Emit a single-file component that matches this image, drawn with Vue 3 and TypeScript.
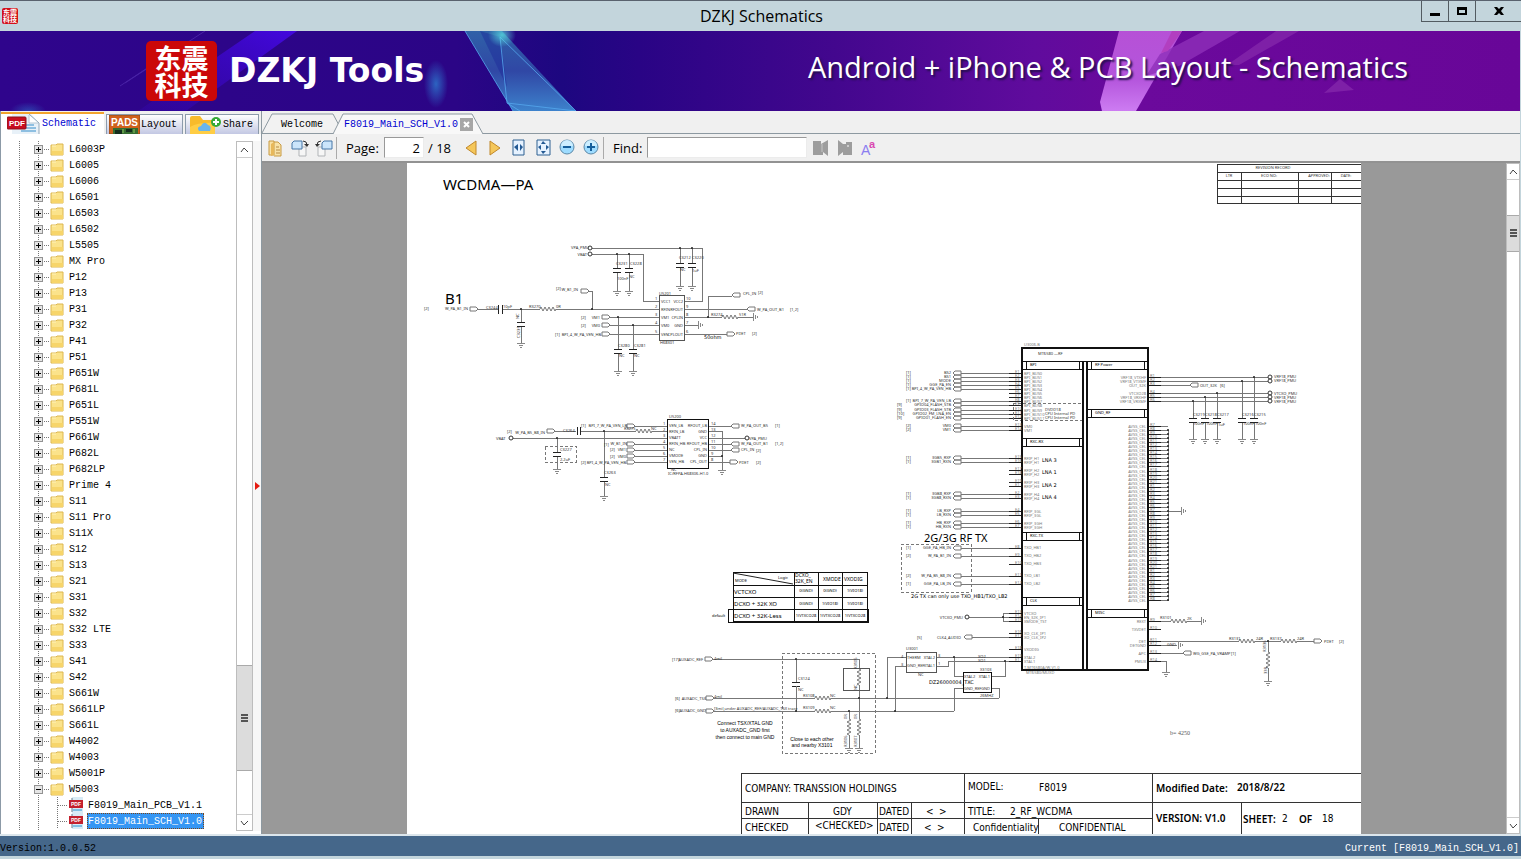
<script setup lang="ts">
import { ref } from 'vue'

type Label = [x: number, y: number, size: number, text: string, anchor?: 'start' | 'middle' | 'end']
type Point = [x: number, y: number]

const folders = [
  'L6003P', 'L6005', 'L6006', 'L6501', 'L6503', 'L6502', 'L5505', 'MX Pro', 'P12', 'P13', 'P31', 'P32',
  'P41', 'P51', 'P651W', 'P681L', 'P651L', 'P551W', 'P661W', 'P682L', 'P682LP', 'Prime 4', 'S11', 'S11 Pro',
  'S11X', 'S12', 'S13', 'S21', 'S31', 'S32', 'S32 LTE', 'S33', 'S41', 'S42', 'S661W', 'S661LP', 'S661L',
  'W4002', 'W4003', 'W5001P', 'W5003',
]
const openFolder = ref('W5003')
const files = ['F8019_Main_PCB_V1.1', 'F8019_Main_SCH_V1.0']
const selected = ref('F8019_Main_SCH_V1.0')
const page = ref('2')
const query = ref('')

function toggle(name: string) {
  openFolder.value = openFolder.value === name ? '' : name
}

const leftStubs = [
  373, 377, 381, 385, 389, 393, 397, 401, 405, 410, 414, 418, 426, 430, 458, 462, 470, 474, 482, 486, 494, 498,
  511, 515, 523, 527, 548, 556, 564, 576, 584, 613, 617, 621, 633, 637, 649, 657, 661,
]
const groundPins = Array.from({ length: 44 }, (_, i) => 426 + Math.round((i * 174) / 43))
const rightStubs = [377, 381, 385, 393, 397, 401, ...groundPins, 621, 629, 641, 645, 653, 661]
const stubs = leftStubs.map(y => `M1009 ${y}H1022`).join('') + rightStubs.map(y => `M1148 ${y}H1161`).join('')

const wires = [
  // band 1 amplifier
  'M592 248H702V301H684', 'M592 254H643V301H659', 'M589 291H592V309', 'M478 309H498M503 309H540M556 309H659',
  'M610 317H659M610 325H659M610 334H659', 'M684 309H747', 'M684 317H722M738 317H753M708 317V296H732',
  'M684 325H698', 'M684 334H727', 'M521 309V322M521 326V343',
  // band 5 / 8 amplifier
  'M555 431H576M580 431H636M652 431H667', 'M635 426H667M513 438H667M635 444H667M635 450H667M635 456H667M635 462H667',
  'M604 431V477', 'M708 426H731M708 431H722V470M708 438H745M708 444H731M708 450H731M708 456H722M708 462H730',
  // transceiver inputs
  ...[373, 377, 381, 385, 389, 401, 405, 410, 414, 418, 426, 430, 458, 462, 494, 498, 511, 515, 523, 527, 548, 556, 576, 584].map(y => `M961 ${y}H1010`),
  'M969 617H1003M1010 613H1003V621H1010M1003 617H1010', 'M972 637H1010',
  'M936 657H1010M936 666H948V661H1010', 'M906 657H887V698M906 666H895V711', 'M954 657V676H963M991 676H1005V661',
  'M963 688H954V711M991 688H999V698',
  // transceiver outputs
  ...groundPins.map(y => `M1161 ${y}H1168`),
  'M1161 377H1268M1161 381H1268M1161 385H1190M1161 393H1268M1161 397H1268M1161 401H1268',
  'M1168 430V601M1168 511H1181', 'M1161 621H1171M1187 621H1201', 'M1161 641H1239M1255 641H1281M1297 641H1314',
  'M1161 645H1177', 'M1161 653H1183', 'M1161 661H1166V672', 'M1268 641V652M1268 668V681',
  // auxiliary ADC
  'M713 659H859V669M859 685V719M859 735V748', 'M714 698H815M831 698H999', 'M714 711H815M831 711H954', 'M849 711V719M849 735V748',
].join('')

// x, start of the lead, plates, ground
const capacitors: [number, number, number, number][] = [
  [617, 254, 270, 291], [629, 254, 270, 291], [680, 248, 265, 286], [692, 248, 265, 286], [618, 317, 351, 371],
  [633, 325, 351, 371], [557, 438, 454, 469], [604, 470, 479, 496], [1193, 401, 420, 439], [1205, 397, 420, 439],
  [1217, 393, 420, 439], [1242, 381, 420, 439], [1254, 377, 420, 439], [521, 309, 324, 343],
]
const grounds: Point[] = [[722, 470], [1166, 672], [1268, 681], [849, 748], [859, 748]]
const sideGrounds: Point[] = [[753, 317], [698, 325], [1181, 511], [1201, 621], [1178, 645]]
const resistors: Point[] = [[540, 309], [722, 317], [636, 431], [1171, 621], [1239, 641], [1281, 641], [815, 698], [815, 711]]
const uprightResistors: Point[] = [[859, 669], [859, 719], [849, 719], [1268, 652]]
const outPorts: Point[] = [
  [581, 291], [470, 309], [602, 317], [602, 325], [602, 334], [727, 334], [547, 431], [627, 426], [627, 444],
  [627, 450], [627, 456], [627, 462], [730, 462], [705, 659], [706, 698], [706, 711], [1314, 641],
]
const inPorts: Point[] = [
  [732, 295], [747, 309], [731, 426], [731, 444], [731, 450], [1190, 385], [1183, 653], [964, 637],
  ...[373, 377, 381, 385, 389, 401, 405, 410, 414, 418, 426, 430, 458, 462, 494, 498, 511, 515, 523, 527, 548, 556, 576, 584].map(y => [953, y] as Point),
]
const terminals: Point[] = [
  [590, 248], [590, 254], [511, 438], [747, 438], [967, 617], [1270, 377], [1270, 381], [1270, 393], [1270, 397], [1270, 401],
]
const dots: Point[] = [
  [617, 254], [629, 254], [680, 248], [692, 248], [592, 309], [521, 309], [618, 317], [633, 325], [708, 317], [604, 431],
  [557, 438], [722, 456], [1003, 617], [954, 657], [1005, 661], [887, 698], [895, 711], [1254, 377], [1242, 381],
  [1217, 393], [1205, 397], [1193, 401], [1268, 641], [796, 659], [796, 711], [859, 698], [849, 711],
  ...groundPins.slice(1).map(y => [1168, y] as Point),
]
const sections: [number, number, string][] = [
  [1022, 361, 'BPI'], [1022, 438, 'RXC-RX'], [1022, 532, 'RXC-TX'], [1022, 597, 'CLK'],
  [1087, 361, 'RF Power'], [1087, 409, 'GND_RF'], [1087, 609, 'MISC'],
]

const nets: [number, string, string][] = [
  [373, 'BS2', '[1]'], [377, 'BS1', '[1]'], [381, 'MODE', '[1]'], [385, 'GGE_PA_EN', '[1]'], [389, 'BPI_4_W_PA_VEN_HB', '[1]'],
  [401, 'BPI_7_W_PA_VEN_LB', '[1]'], [405, 'GPIO04_FLASH_STB', '[9]'], [410, 'GPIO03_FLASH_STB', '[9]'],
  [414, 'GPIO02_FM_LNA_EN', '[10]'], [418, 'GPIO01_FLASH_EN', '[9]'], [426, 'VM0', '[2]'], [430, 'VM1', '[2]'],
  [458, '3GB5_RXP', '[1]'], [462, '3GB1_RXN', '[1]'], [494, '3GB8_RXP', '[1]'], [498, '3GB8_RXN', '[1]'],
  [511, 'LB_RXP', '[1]'], [515, 'LB_RXN', '[1]'], [523, 'HB_RXP', '[1]'], [527, 'HB_RXN', '[1]'],
  [548, 'GGE_PA_HB_IN', '[1]'], [556, 'W_PA_B1_IN', '[2]'], [576, 'W_PA_B5_B8_IN', '[2]'], [584, 'GGE_PA_LB_IN', '[1]'],
]
const netLabels: Label[] = nets.flatMap(([y, name, sheet]): Label[] => [
  [951, y + 1, 4, name, 'end'],
  [y > 402 && y < 420 ? 897 : 906, y + 1, 4, sheet],
])

const pinNames: Label[] = [
  ...[373, 377, 381, 385, 389, 393, 397, 401, 405, 410, 414, 418].map((y, i): Label => [1024, y + 2, 4, `BPI_BUS${i}`]),
  [1024, 428, 4, 'VM0'], [1024, 432, 4, 'VM1'],
  ...[458, 462, 470, 474, 482, 486, 494, 498].map((y, i): Label => [1024, y + 2, 4, `RFIP_H${(i >> 1) + 1}`]),
  ...[511, 515, 523, 527].map((y, i): Label => [1024, y + 2, 4, `RFIP_3G${i < 2 ? 'L' : 'H'}`]),
  [1024, 549, 4, 'TXO_HB1'], [1024, 557, 4, 'TXO_HB2'], [1024, 565, 4, 'TXO_HB3'], [1024, 577, 4, 'TXO_LB1'], [1024, 585, 4, 'TXO_LB2'],
  [1024, 615, 4, 'VTCXO'], [1024, 619, 4, 'EN_32K_IP1'], [1024, 623, 4, 'XMODE_TST'], [1024, 635, 4, 'XO_CLK_IP1'],
  [1024, 639, 4, 'XO_CLK_IP2'], [1024, 651, 4, 'VXODIG'], [1024, 659, 4, 'XTAL2'], [1024, 663, 4, 'XTAL1'],
  [1146, 379, 4, 'VRF18_VTXHF', 'end'], [1146, 383, 4, 'VRF18_VTXMF', 'end'], [1146, 387, 4, 'OUT_32K', 'end'],
  [1146, 395, 4, 'VTCXO28', 'end'], [1146, 399, 4, 'VRF18_VRXHF', 'end'], [1146, 403, 4, 'VRF18_VRXMF', 'end'],
  ...groundPins.map((y): Label => [1146, y + 2, 4, 'AVSS_CEL', 'end']),
  [1146, 623, 4, 'REXT', 'end'], [1146, 631, 4, 'TXVDET', 'end'], [1146, 643, 4, 'DET', 'end'], [1146, 647, 4, 'DETGND', 'end'],
  [1146, 655, 4, 'APC', 'end'], [1146, 663, 4, 'PMUX', 'end'],
  ...rightStubs.map((y, i): Label => [1150, y, 4, 'R' + (i % 21 + 1)]),
  ...leftStubs.map((y, i): Label => [1015, y, 4, 'E' + (i % 19 + 1)]),
  [1024, 346, 4, 'U3006-B'], [1024, 669, 4, 'T-MT6580A/W-V1.0'], [1026, 674, 4, 'MT6580/MUXD'],
]

const smallLabels: Label[] = [
  [589, 249, 4, 'VPA_PMU', 'end'], [587, 256, 4, 'VBAT', 'end'], [616, 265, 4, 'C3231'], [630, 265, 4, 'C3228'],
  [617, 280, 4, '100nF'], [629, 278, 4, 'NC'], [679, 259, 4, 'C3212'], [692, 259, 4, 'C3220'], [680, 271, 4, 'NC'], [692, 272, 4, '1uF'],
  [556, 290, 4, '[2]'], [578, 291, 4, 'W_B1_IN', 'end'], [424, 310, 4, '[2]'], [468, 310, 4, 'W_PA_B1_IN', 'end'],
  [486, 309, 4, 'C3244'], [503, 308, 4, '10pF'], [529, 308, 4, 'R3270'], [556, 308, 4, '0R'], [659, 295, 4, 'U5201'], [660, 344, 4, 'H68301'],
  [661, 303, 4, 'VCC1'], [661, 311, 4, 'RFIN'], [661, 319, 4, 'VM1'], [661, 327, 4, 'VM0'], [661, 336, 4, 'VEN'],
  [683, 303, 4, 'VCC2', 'end'], [683, 311, 4, 'RFOUT', 'end'], [683, 319, 4, 'CPLIN', 'end'], [683, 327, 4, 'GND', 'end'], [683, 336, 4, 'CPLOUT', 'end'],
  ...[300, 308, 316, 324, 333].flatMap((y, i): Label[] => [[655, y, 4, String(i + 1)], [686, y, 4, String(10 - i)]]),
  [581, 319, 4, '[2]'], [600, 319, 4, 'VM1', 'end'], [581, 327, 4, '[2]'], [600, 327, 4, 'VM0', 'end'],
  [555, 336, 4, '[1]'], [601, 336, 4, 'BPI_4_W_PA_VEN_HB', 'end'], [618, 347, 4, 'C3280'], [634, 347, 4, 'C3281'], [619, 357, 4, 'NC'], [634, 357, 4, 'NC'],
  [743, 295, 4, 'CPL_IN'], [758, 294, 4, '[2]'], [757, 311, 4, 'W_PA_OUT_B1'], [790, 311, 4, '[1,2]'], [711, 316, 4, 'R3274'], [739, 316, 4, '51R'],
  [736, 335, 4, 'PDET'], [752, 335, 4, '[2]'],
  [507, 433, 4, '[2]'], [545, 434, 4, 'W_PA_B5_B8_IN', 'end'], [563, 432, 4, 'C3264'], [496, 440, 4, 'VBAT'], [581, 427, 4, '[1]'],
  [627, 427, 4, 'BPI_7_W_PA_VEN_LB', 'end'], [624, 430, 4, 'R3275'], [651, 430, 4, 'NC'], [560, 451, 4, 'C3227'], [560, 461, 4, '2.2uF'],
  [604, 446, 4, '[1]'], [627, 445, 4, 'W_B1_IN', 'end'], [610, 451, 4, '[2]'], [626, 451, 4, 'VM1', 'end'], [610, 458, 4, '[2]'], [626, 458, 4, 'VM0', 'end'],
  [581, 464, 4, '[2]'], [626, 464, 4, 'BPI_4_W_PA_VEN_HB', 'end'], [604, 474, 4, 'C3263'], [605, 486, 4, 'NC'], [669, 418, 4, 'U5200'],
  ...['VEN_LB', 'RFIN_LB', 'VBATT', 'RFIN_HB', 'NC', 'VMODE', 'VEN_HB'].map((t, i): Label => [669, 427 + i * 6, 4, t]),
  ...['RFOUT_LB', 'GND', 'VCC', 'RFOUT_HB', 'CPL_IN', 'GND', 'CPL_OUT'].map((t, i): Label => [707, 427 + i * 6, 4, t, 'end']),
  ...[0, 1, 2, 3, 4, 5, 6].flatMap((i): Label[] => [[663, 425 + i * 6, 4, String(i + 1)], [711, 425 + i * 6, 4, String(14 - i)]]),
  [671, 471, 4, 'NC'], [668, 475, 4, 'IC/RFPA-H68306-H1.0'], [741, 427, 4, 'W_PA_OUT_B5'], [775, 427, 4, '[1]'], [749, 440, 4, 'VPA_PMU'],
  [741, 445, 4, 'W_PA_OUT_B1'], [775, 445, 4, '[1,2]'], [741, 451, 4, 'CPL_IN'], [756, 452, 4, '[2]'], [739, 464, 4, 'PDET'], [756, 464, 4, '[2]'],
  [1038, 355, 4, 'MT6580 —RF'], [1045, 411, 4, 'DVDD18'], [1045, 415, 4, 'CPU Internal PD'], [1045, 419, 4, 'CPU Internal PD'],
  [963, 619, 4, 'VTCXO_PMU', 'end'], [917, 639, 4, '[5]'], [961, 639, 4, 'CLK4_AUDIO', 'end'],
  [906, 650, 4, 'U3001'], [907, 659, 4, 'THERM'], [935, 659, 4, 'XTAL2', 'end'], [907, 667, 4, 'GND_REF'], [935, 667, 4, 'XTAL1', 'end'], [918, 676, 4, 'NC'],
  [978, 658, 4, 'XO2'], [978, 662, 4, 'XO1'], [901, 658, 4, '4'], [901, 666, 4, '3'], [938, 657, 4, '3'], [938, 665, 4, '1'],
  [980, 671, 4, 'X3103'], [964, 678, 4, 'XTAL2'], [990, 678, 4, 'XTAL1', 'end'], [964, 690, 4, 'GND_REF'], [990, 690, 4, 'GND', 'end'], [980, 697, 4, '26MHZ'],
  [1274, 378, 4, 'VRF18_PMU'], [1274, 382, 4, 'VRF18_PMU'], [1200, 387, 4, 'OUT_32K'], [1220, 387, 4, '[6]'], [1274, 395, 4, 'VTCXO_PMU'],
  [1274, 399, 4, 'VRF18_PMU'], [1274, 403, 4, 'VRF18_PMU'], [1193, 416, 4, 'C3219'], [1205, 416, 4, 'C3218'], [1217, 416, 4, 'C3217'],
  [1242, 416, 4, 'C3216'], [1254, 416, 4, 'C3215'], [1193, 425, 4, '100nF'], [1206, 425, 4, '100nF'], [1218, 426, 4, '1uF'], [1243, 425, 4, '100nF'], [1255, 425, 4, '100nF'],
  [1160, 619, 4, 'R3101'], [1187, 620, 4, '2K'], [1167, 646, 4, 'GND'], [1193, 655, 4, 'WG_GSE_PA_VRAMP'], [1231, 655, 4, '[1]'],
  [1229, 640, 4, 'R3131'], [1256, 640, 4, '24R'], [1270, 640, 4, 'R3137'], [1297, 640, 4, '24R'], [1324, 643, 4, 'PDET'], [1339, 643, 4, '[2]'],
  [672, 661, 4, '[17]'], [703, 661, 4, 'AUXADC_REF', 'end'], [714, 660, 4, '4mil'], [675, 700, 4, '[6]'], [706, 700, 4, 'AUXADC_TSX', 'end'],
  [714, 698, 4, '4mil'], [675, 712, 4, '[6]'], [706, 712, 4, 'AUXADC_GND', 'end'], [714, 710, 4, '[3mil,under AUXADC_REF/AUXADC_TSX trace'],
  [798, 680, 4, 'C3124'], [798, 691, 4, 'NC'], [803, 697, 4, 'R3108'], [830, 697, 4, 'NC'], [803, 709, 4, 'R3109'], [830, 709, 4, 'NC'],
  [1273, 169, 4, 'REVISION RECORD', 'middle'], [1229, 177, 4, 'LTR', 'middle'],
  [1269, 177, 4, 'ECO NO:', 'middle'], [1319, 177, 4, 'APPROVED:', 'middle'], [1346, 177, 4, 'DATE:', 'middle'],
]

const uprightLabels: Label[] = [
  [519, 319, 4, 'NC'], [520, 338, 4, 'C3235'], [857, 669, 4, 'R3105'], [857, 690, 4, 'NC'], [847, 719, 4, '0R'], [857, 719, 4, '0R'],
  [847, 747, 4, 'R3106'], [857, 747, 4, 'R3107'], [1266, 652, 4, 'R3136'], [1267, 674, 4, '33R'],
]

const largeLabels: Label[] = [
  [443, 190, 15, 'WCDMA—PA'], [445, 304, 15, 'B1'], [924, 542, 11, '2G/3G RF TX'],
  [735, 582, 4, 'MODE'], [778, 579, 4, 'Logic'], [795, 577, 5, 'DCXO_'], [795, 583, 5, '32K_EN'], [823, 581, 5, 'XMODE'], [844, 581, 5, 'VXODIG'],
  [734, 594, 6, 'VCTCXO'], [734, 606, 6, 'DCXO + 32K XO'], [734, 618, 6, 'DCXO + 32K-Less'], [712, 617, 4, 'default'],
  [806, 592, 4, '0(GND)', 'middle'], [830, 592, 4, '0(GND)', 'middle'], [855, 592, 4, '1(VIO18)', 'middle'],
  [806, 605, 4, '0(GND)', 'middle'], [830, 605, 4, '1(VIO18)', 'middle'], [855, 605, 4, '1(VIO18)', 'middle'],
  [806, 617, 4, '1(VTXCO28', 'middle'], [830, 617, 4, '1(VTXCO28', 'middle'], [855, 617, 4, '1(VTXCO28', 'middle'],
]
const wideLabels: Label[] = [
  [911, 598, 5, '2G TX can only use TXO_HB1/TXO_LB2'], [929, 684, 5, 'DZ26000004_TXC'], [704, 339, 5, '50ohm'],
  [1042, 462, 5, 'LNA 3'], [1042, 474, 5, 'LNA 1'], [1042, 487, 5, 'LNA 2'], [1042, 499, 5, 'LNA 4'],
]
const notes: Label[] = [
  [745, 725, 5, 'Connect TSX/XTAL GND', 'middle'], [745, 732, 5, 'to AUXADC_GND first', 'middle'], [745, 739, 5, 'then connect to main GND', 'middle'],
  [812, 741, 5, 'Close to each other', 'middle'], [812, 747, 5, 'and nearby X3101', 'middle'],
]
const blockLabels: Label[] = [
  [745, 792, 10, 'COMPANY: TRANSSION HOLDINGS'], [968, 790, 10, 'MODEL:'], [1039, 791, 10, 'F8019'],
  [745, 815, 10, 'DRAWN'], [833, 815, 10, 'GDY'], [879, 815, 10, 'DATED'], [926, 815, 10, '<'], [939, 815, 10, '>'],
  [968, 815, 10, 'TITLE:'], [1010, 815, 10, '2_RF_WCDMA'], [745, 831, 10, 'CHECKED'], [815, 829, 10, '<CHECKED>'],
  [879, 831, 10, 'DATED'], [924, 831, 10, '<'], [937, 831, 10, '>'], [973, 831, 10, 'Confidentiality'], [1059, 831, 10, 'CONFIDENTIAL'],
  [1282, 822, 10, '2'], [1322, 822, 10, '18'],
]
const strongLabels: Label[] = [
  [1156, 792, 10, 'Modified Date:'], [1237, 791, 10, '2018/8/22'], [1156, 822, 10, 'VERSION:'], [1205, 822, 10, 'V1.0'],
  [1243, 823, 10, 'SHEET:'], [1299, 823, 10, 'OF'],
]
</script>

<template>
  <div class="window">
    <header class="titlebar">
      <span class="app-icon" aria-hidden="true"><span>东震</span><span>科技</span></span>
      <h1>DZKJ Schematics</h1>
      <div class="window-buttons">
        <button type="button" aria-label="Minimize"><svg width="12" height="12"><path d="M1 8h10v3H1z" /></svg></button>
        <button type="button" aria-label="Maximize"><svg width="12" height="12"><path d="M1 2h10v8H1zM3 5v3h6V5z" fill-rule="evenodd" /></svg></button>
        <button type="button" class="close" aria-label="Close"><svg width="12" height="12"><path d="M1 2h3l2 2 2-2h3L8 6l3 4H8L6 8l-2 2H1l3-4z" /></svg></button>
      </div>
    </header>

    <section class="banner">
      <svg class="banner-art" viewBox="0 0 1520 80" preserveAspectRatio="none" aria-hidden="true">
        <defs>
          <linearGradient id="sky">
            <stop offset="0" stop-color="#2f058c" /><stop offset=".3" stop-color="#2b0586" /><stop offset=".37" stop-color="#1d0780" />
            <stop offset=".42" stop-color="#290485" /><stop offset=".55" stop-color="#43078e" /><stop offset=".68" stop-color="#600b9d" />
            <stop offset=".75" stop-color="#6b099c" /><stop offset="1" stop-color="#680698" />
          </linearGradient>
          <linearGradient id="streak" x1="1" x2="0" y2="1"><stop offset="0" stop-color="#4308de" /><stop offset="1" stop-color="#3807c4" stop-opacity=".2" /></linearGradient>
          <linearGradient id="crystal" x2="0" y2="1"><stop offset="0" stop-color="#2f61a8" /><stop offset=".5" stop-color="#3047a5" /><stop offset="1" stop-color="#3d82cc" /></linearGradient>
          <linearGradient id="pink" x2="0" y2="1"><stop offset="0" stop-color="#b651d6" /><stop offset=".6" stop-color="#b455dc" /><stop offset="1" stop-color="#cd7cf2" /></linearGradient>
          <radialGradient id="glow"><stop offset="0" stop-color="#2d7bd0" stop-opacity=".8" /><stop offset="1" stop-color="#2d7bd0" stop-opacity="0" /></radialGradient>
          <radialGradient id="spark"><stop offset="0" stop-color="#58dce0" stop-opacity=".8" /><stop offset="1" stop-color="#58dce0" stop-opacity="0" /></radialGradient>
        </defs>
        <path fill="url(#sky)" d="M0 0h1520v80H0z" />
        <path fill="url(#streak)" d="M255 0h42L186 80h-48z" />
        <path d="M205 0L125 52M170 22L120 55" stroke="#5a35b8" opacity=".6" />
        <ellipse cx="28" cy="80" rx="18" ry="9" fill="url(#glow)" opacity=".6" />
        <ellipse cx="436" cy="53" rx="12" ry="24" fill="url(#glow)" />
        <path fill="url(#crystal)" d="M465 0h37l74 80h-63z" />
        <path fill="#1d2798" opacity=".45" d="M480 0l20 6 7 50z" />
        <path d="M465 0l48 80M500 6l76 74M500 6l7 66 13 8M507 72l69 8" fill="none" stroke="#55a7ed" opacity=".8" />
        <ellipse cx="502" cy="4" rx="14" ry="12" fill="url(#spark)" />
        <path fill="url(#pink)" d="M1119 0h63l-46 80h-34l-2-9z" />
        <path fill="#8f30b9" d="M1204 0h36l-61 35-33 10 14-22z" opacity=".8" />
        <path fill="#b23fc0" d="M1161 22l11-22h10l-14 20z" />
        <path fill="#8327aa" d="M1276 0h23l-60 34h-12zM1340 48l-16 14 30-3z" opacity=".8" />
      </svg>
      <div class="brand">
        <span class="brand-seal"><span>东震</span><span>科技</span></span>
        <strong>DZKJ Tools</strong>
      </div>
      <p>Android + iPhone &amp; PCB Layout - Schematics</p>
    </section>

    <main class="workspace">
      <aside class="sidebar">
        <nav class="side-tabs" aria-label="Libraries">
          <button type="button" class="side-tab active">
            <svg width="34" height="20" aria-hidden="true">
              <path d="M5 0h19l8 9v11H5z" fill="#e8f1f8" /><path d="M22 0l10 9v11" fill="none" stroke="#93a7b8" /><path d="M22 1v8h9" fill="#fff" stroke="#b6c8d4" />
              <path d="M14 14h15M14 17h15M16 11h11" stroke="#8ebfe1" stroke-width="2" />
              <rect y="3" width="19" height="12" rx="1" fill="#c80d20" stroke="#8b101c" /><text x="2" y="12" class="pdf-text">PDF</text>
            </svg>
            <span>Schematic</span>
          </button>
          <button type="button" class="side-tab">
            <svg width="31" height="19" aria-hidden="true">
              <rect width="31" height="19" fill="#d0601c" stroke="#8e4a1b" /><path d="M4 13h25v6H4z" fill="#356c30" /><path d="M6 15h7v4H6zM17 14h6v3h-6z" fill="#142d1d" /><path d="M14 14v4M25 14v4" stroke="#8fc561" />
              <text x="2" y="11" class="pads-text">PADS</text>
            </svg>
            <span>Layout</span>
          </button>
          <button type="button" class="side-tab">
            <svg width="32" height="19" aria-hidden="true">
              <path d="M0 3q0-2 2-2h8l3 4h12v14H2q-2 0-2-2z" fill="#f8bb2b" /><path d="M0 12q9-5 25-4v11H0z" fill="#ffcd44" />
              <path d="M9 16q-3-4 2-5 3-6 7-1 4 1 2 6z" fill="#69b5eb" /><circle cx="26" cy="7" r="5" fill="#36a936" /><path d="M26 4v6M23 7h6" stroke="#fff" stroke-width="2" />
            </svg>
            <span>Share</span>
          </button>
        </nav>
        <div class="tree-area">
          <ul class="tree">
            <li v-for="name in folders" :key="name">
              <div class="tree-row">
                <button type="button" class="expander" :aria-label="'Toggle ' + name" @click="toggle(name)">
                  <svg width="9" height="9"><path d="M2 4h5v1H2z" /><path v-if="openFolder !== name" d="M4 2h1v5H4z" /></svg>
                </button>
                <svg class="folder" width="14" height="13" aria-hidden="true"><path d="M1 2h5l1-1h6v11H1z" fill="#fbe38b" stroke="#dcb64e" /><path d="M2 8h11v4H2z" fill="#f7d56a" /><path d="M2 3h4" stroke="#fff4bd" /></svg>
                <span>{{ name }}</span>
              </div>
              <ul v-if="openFolder === name" class="files">
                <li v-for="file in files" :key="file">
                  <svg width="17" height="16" aria-hidden="true"><path d="M4 0h11v16H4z" fill="#d9ebf5" /><path d="M4 1v14" stroke="#65788a" /><path d="M5 13h9" stroke="#7fbfe2" stroke-width="2" /><path d="M1 3h14v8H1z" fill="#c3202d" /><text x="3" y="9" class="file-pdf">PDF</text></svg>
                  <button type="button" :class="{ selected: selected === file }" @click="selected = file">{{ file }}</button>
                </li>
              </ul>
            </li>
          </ul>
          <div class="scrollbar tree-scroll" aria-hidden="true">
            <span class="arrow"><svg width="9" height="6"><path d="M1 5l3-4 4 4" /></svg></span>
            <span class="track-before"></span><span class="thumb"><i></i><i></i><i></i></span><span class="track-after"></span>
            <span class="arrow"><svg width="9" height="6"><path d="M1 1l3 4 4-4" /></svg></span>
          </div>
          <div class="splitter" aria-hidden="true"><svg width="5" height="8"><path d="M0 0l5 4-5 4z" fill="#e51b12" /></svg></div>
        </div>
      </aside>

      <section class="document">
        <nav class="doc-tabs" aria-label="Open documents">
          <button type="button" class="doc-tab welcome">
            <svg width="80" height="23" aria-hidden="true"><path d="M0 22L10 3H71L79 18" fill="#f2f2f2" stroke="#8d99a1" /></svg><span>Welcome</span>
          </button>
          <div class="doc-tab current">
            <svg width="152" height="23" aria-hidden="true"><path d="M0 23L10 3H139L150 23" fill="#f8f8f8" stroke="#8d99a1" /></svg>
            <button type="button">F8019_Main_SCH_V1.0</button>
            <button type="button" class="tab-close" aria-label="Close tab"><svg width="13" height="13"><path d="M4 4l5 5M9 4l-5 5" stroke="#fff" stroke-width="2" /></svg></button>
          </div>
        </nav>

        <div class="toolbar">
          <button type="button" aria-label="Open"><svg width="18" height="18"><path d="M2 2h5v14H2zM7 3h4l3 3v11H7" fill="#f8e2a7" stroke="#c89a43" /><path d="M7 3L4 5v12l3-1z" fill="#e7b85b" /><path d="M9 8h3M9 11h4M9 14h4" stroke="#b68b45" /></svg></button>
          <button type="button" aria-label="Rotate clockwise"><svg width="18" height="18"><path d="M8 8h7v9H8z" fill="#f6f6f6" stroke="#b1b4b7" /><path d="M3 2h8v8H1V4z" fill="#cbe5fb" stroke="#4777a7" /><path d="M12 2q4 0 4 4" fill="none" stroke="#333" /><path d="M13 5h5l-2 3z" fill="#333" /></svg></button>
          <button type="button" aria-label="Rotate counterclockwise"><svg width="18" height="18"><path d="M3 8h7v9H3z" fill="#f6f6f6" stroke="#b1b4b7" /><path d="M9 2h8v8H7V4z" fill="#cbe5fb" stroke="#4777a7" /><path d="M6 2q-4 0-4 4" fill="none" stroke="#333" /><path d="M0 5h5L2 8z" fill="#333" /></svg></button>
          <span class="separator"></span>
          <label class="page-label" for="page">Page:</label><input id="page" v-model="page" class="page-input" type="text"><span class="page-total">/ 18</span>
          <button type="button" aria-label="Previous page"><svg width="12" height="16"><path d="M11 1v14L1 8z" fill="#f5c75a" stroke="#c1882b" /></svg></button>
          <button type="button" aria-label="Next page"><svg width="12" height="16"><path d="M1 1v14l10-7z" fill="#f5c75a" stroke="#c1882b" /></svg></button>
          <button type="button" aria-label="Fit width"><svg width="14" height="17"><path d="M1 1h11v15H1z" fill="#e6f2ff" stroke="#2f6091" /><path d="M6 5v7L2 8zM8 5l3 3-3 4z" fill="#245a94" /></svg></button>
          <button type="button" aria-label="Fit page"><svg width="15" height="17"><path d="M1 1h13v15H1z" fill="#e6f2ff" stroke="#2f6091" /><path d="M7 2l3 3H5zM7 15l3-3H5zM2 8l3-2v5zM13 8l-3-2v5z" fill="#245a94" /></svg></button>
          <button type="button" aria-label="Zoom out"><svg width="17" height="17"><circle cx="8" cy="8" r="7" fill="#9edcff" stroke="#5d88a6" /><path d="M2 7a6 6 0 0 1 12 0z" fill="#cceeff" /><path d="M4 8h8" stroke="#145e9b" stroke-width="2" /></svg></button>
          <button type="button" aria-label="Zoom in"><svg width="17" height="17"><circle cx="8" cy="8" r="7" fill="#9edcff" stroke="#5d88a6" /><path d="M2 7a6 6 0 0 1 12 0z" fill="#cceeff" /><path d="M4 8h8M8 4v8" stroke="#145e9b" stroke-width="2" /></svg></button>
          <span class="separator"></span>
          <label class="find-label" for="find">Find:</label><input id="find" v-model="query" class="find-input" type="text">
          <button type="button" aria-label="Find previous"><svg width="16" height="16"><path d="M0 1h8v3l7-4v16l-5-4v3H0z" fill="#9d9d9d" /><path d="M9 4v8" stroke="#c5c5c5" /></svg></button>
          <button type="button" aria-label="Find next"><svg width="16" height="16"><path d="M1 0l5 4h3V2h6v13H6v-3l-5 4z" fill="#9d9d9d" /><circle cx="11" cy="6" r="1" fill="#ddd" /></svg></button>
          <button type="button" aria-label="Match case"><svg width="18" height="22"><text x="1" y="18" class="case-big">A</text><text x="9" y="11" class="case-small">a</text></svg></button>
        </div>

        <div class="viewer">
          <div class="canvas">
            <svg class="sheet" viewBox="407 163 954 671" role="img" aria-label="WCDMA power amplifier schematic">
              <defs>
                <path id="out-port" d="M0-2H6L8 0L6 2H0Z" />
                <path id="in-port" d="M8-2H2L0 0L2 2H8Z" />
                <path id="ground" d="M-4 0H4M-2 2H2M-1 4H1" />
                <path id="side-ground" d="M0-4V4M2-2V2M4-1V1" />
                <path id="resistor" d="M0 0l1-2 2 4 2-4 2 4 2-4 2 4 2-4 2 4 1-2" />
              </defs>
              <path class="wire" :d="wires" />
              <path class="stub" :d="stubs" />
              <path class="stub" d="M498 305v9M502 305v9M577 427v8M580 427v8M792 682h8M792 686h8" />
              <path class="wire" d="M796 659V682M796 686V711" />
              <g class="part">
                <use v-for="(p, i) in outPorts" :key="'o' + i" href="#out-port" :x="p[0]" :y="p[1]" />
                <use v-for="(p, i) in inPorts" :key="'i' + i" href="#in-port" :x="p[0]" :y="p[1]" />
                <use v-for="(p, i) in resistors" :key="'r' + i" href="#resistor" :x="p[0]" :y="p[1]" />
                <use v-for="(p, i) in uprightResistors" :key="'u' + i" href="#resistor" :transform="`translate(${p[0]} ${p[1]}) rotate(90)`" />
                <use v-for="(p, i) in sideGrounds" :key="'s' + i" class="earth" href="#side-ground" :x="p[0]" :y="p[1]" />
                <use v-for="(p, i) in grounds" :key="'g' + i" class="earth" href="#ground" :x="p[0]" :y="p[1]" />
                <circle v-for="(p, i) in terminals" :key="'t' + i" :cx="p[0]" :cy="p[1]" r="2" />
              </g>
              <g v-for="(c, i) in capacitors" :key="'c' + i">
                <path class="wire" :d="`M${c[0]} ${c[1]}V${c[2] - 2}M${c[0]} ${c[2] + 2}V${c[3]}`" />
                <path class="stub" :d="`M${c[0] - 4} ${c[2] - 2}h8m-8 4h8`" />
                <use class="earth" href="#ground" :x="c[0]" :y="c[3]" />
              </g>
              <circle v-for="(p, i) in dots" :key="'d' + i" class="dot" :cx="p[0]" :cy="p[1]" r="1" />

              <path class="dashed" d="M545 446H576V462H545ZM901 544H971V592H901ZM1013 403H1082V420H1013ZM782 653H875V753H782Z" />
              <path class="thin-box" d="M659 295H684V340H659ZM906 652H936V672H906ZM843 668H869V690H843Z" />
              <path class="bold-box" d="M667 419H708V468H667ZM963 672H991V692H963Z" />
              <path class="bold-box heavy" d="M1022 348H1148V670H1022ZM1083 361V670M1087 361V670" />
              <path class="bold-box" d="M1022 361H1148" />
              <g v-for="(s, i) in sections" :key="'h' + i">
                <path class="bold-box" :d="`M${s[0]} ${s[1]}h61v8h-61zm4 0v8m53-8v8`" />
                <text :x="s[0] + 8" :y="s[1] + 5" font-size="4">{{ s[2] }}</text>
              </g>

              <g class="small"><text v-for="(t, i) in smallLabels" :key="i" :x="t[0]" :y="t[1]" :font-size="t[2]" :text-anchor="t[4]">{{ t[3] }}</text></g>
              <g class="small"><text v-for="(t, i) in netLabels" :key="i" :x="t[0]" :y="t[1]" :font-size="t[2]" :text-anchor="t[4]">{{ t[3] }}</text></g>
              <g class="faint"><text v-for="(t, i) in pinNames" :key="i" :x="t[0]" :y="t[1]" :font-size="t[2]" :text-anchor="t[4]">{{ t[3] }}</text></g>
              <g class="small"><text v-for="(t, i) in uprightLabels" :key="i" :font-size="t[2]" :transform="`translate(${t[0]} ${t[1]}) rotate(-90)`">{{ t[3] }}</text></g>
              <g><text v-for="(t, i) in largeLabels" :key="i" :x="t[0]" :y="t[1]" :font-size="t[2]" :text-anchor="t[4]">{{ t[3] }}</text></g>
              <g class="wide"><text v-for="(t, i) in wideLabels" :key="i" :x="t[0]" :y="t[1]" :font-size="t[2]">{{ t[3] }}</text></g>
              <g class="notes"><text v-for="(t, i) in notes" :key="i" :x="t[0]" :y="t[1]" :font-size="t[2]" :text-anchor="t[4]">{{ t[3] }}</text></g>
              <text class="serif" x="1170" y="735" font-size="6">b= 4250</text>

              <path class="bold-box" d="M733 572H867V621H733ZM733 585H867M733 597H867M733 609H867M794 572V621M818 572V621M842 572V621M728 609H868V622H728Z" />
              <path class="diagonal" d="M733 573L793 584" />
              <path class="rule" d="M1217 164H1361M1217 172H1361M1217 180H1361M1217 188H1361M1217 196H1361M1217 203H1361M1217 164V203M1241 172V203M1298 172V203M1331 172V203" />
              <path class="rule" d="M741 834V773H1361M741 802H1361M741 818H1152M808 802V834M877 802V834M911 802V834M964 773V834M1038 818V834M1152 773V834M1241 802V834" />
              <g class="block"><text v-for="(t, i) in blockLabels" :key="i" :x="t[0]" :y="t[1]" :font-size="t[2]">{{ t[3] }}</text></g>
              <g class="block strong"><text v-for="(t, i) in strongLabels" :key="i" :x="t[0]" :y="t[1]" :font-size="t[2]">{{ t[3] }}</text></g>
            </svg>
          </div>
          <div class="scrollbar page-scroll" aria-hidden="true">
            <span class="arrow"><svg width="9" height="6"><path d="M1 5l3-4 4 4" /></svg></span>
            <span class="track-before"></span><span class="thumb"><i></i><i></i><i></i></span><span class="track-after"></span>
            <span class="arrow"><svg width="9" height="6"><path d="M1 1l3 4 4-4" /></svg></span>
          </div>
        </div>
      </section>
    </main>

    <footer class="status"><span>Version:1.0.0.52</span><span>Current [F8019_Main_SCH_V1.0]</span></footer>
  </div>
</template>

<style>
html, body { margin: 0; background: #c3d5dc; }
</style>

<style scoped>
* { box-sizing: border-box; }
button { border: 0; padding: 0; margin: 0; background: none; font: inherit; color: inherit; }
.window { display: flex; flex-direction: column; height: 100vh; padding-bottom: 3px; overflow: hidden; background: #c3d5dc; font: 10px/16px "Liberation Mono", monospace; color: #000; }

.titlebar { display: grid; grid-template-columns: 1fr auto 1fr; align-items: center; height: 31px; flex: none; border-top: 1px solid #59626e; padding-left: 2px; }
.titlebar h1 { margin: 0; font: 16px/28px "Open Sans", "Noto Sans", sans-serif; }
.app-icon { display: grid; width: 16px; height: 16px; align-content: center; border-radius: 2px; background: #d2101a; color: #fff; font: bold 7px/7px "Noto Sans CJK SC", sans-serif; text-align: center; }
.window-buttons { display: flex; align-self: start; justify-self: end; height: 21px; border: 1px solid #525b61; border-width: 0 0 1px 1px; }
.window-buttons button { display: grid; place-items: center; width: 27px; border-right: 1px solid #525b61; }
.window-buttons .close { width: 45px; border: 0; }

.banner { position: relative; display: flex; align-items: center; justify-content: space-between; height: 80px; flex: none; margin-right: 1px; padding: 0 112px 0 146px; background: #4b078f; color: #fff; }
.banner-art { position: absolute; inset: 0; width: 100%; height: 100%; }
.brand, .banner p { position: relative; }
.brand { display: flex; align-items: center; gap: 12px; }
.brand-seal { display: grid; place-content: center; width: 71px; height: 60px; border-radius: 5px; background: #cb0808; font: bold 27px/27px "Noto Sans CJK SC", sans-serif; }
.brand strong { font: bold 33px/40px "DejaVu Sans", sans-serif; }
.banner p { margin: 0 0 8px; font: 29px/40px "Open Sans", "Noto Sans", sans-serif; text-shadow: 2px 2px 2px #25104e; }

.workspace { display: grid; grid-template-columns: 262px 1fr; flex: 1; min-height: 0; margin-right: 1px; border-bottom: 2px solid #dce6ec; background: #f0f0f0; }
.sidebar { display: flex; flex-direction: column; min-height: 0; border-left: 1px solid #8c9aa7; border-right: 1px solid #8d99a1; }
.side-tabs { display: flex; align-items: flex-end; gap: 2px; height: 23px; flex: none; padding-right: 2px; }
.side-tab { display: flex; align-items: center; justify-content: space-between; height: 20px; width: 77px; padding: 0 5px 0 2px; border: 1px solid #8c9bab; border-bottom: 0; background: linear-gradient(#fff, #c3c8e3); }
.side-tab svg { flex: none; }
.side-tab:last-child { width: 74px; padding-left: 4px; }
.side-tab.active { width: 103px; height: 22px; padding: 0 8px 0 6px; border: 0; border-top: 2px solid #f2a32c; background: #fff; color: #0000d0; }
.pdf-text { font: bold 8px "Liberation Sans", sans-serif; fill: #fff; }
.pads-text { font: bold 10px "Liberation Sans", sans-serif; fill: #fff; }
.tree-area { display: grid; grid-template-columns: 1fr 17px 8px; flex: 1; min-height: 0; padding: 7px 0 3px; background: #fff; }
.tree, .files { list-style: none; margin: 0; padding: 0; }
.tree { overflow: hidden; background: repeating-linear-gradient(#777 0 1px, transparent 1px 2px) 18px 0 / 1px 100% no-repeat, repeating-linear-gradient(#777 0 1px, transparent 1px 2px) 37px 0 / 1px 100% no-repeat; }
.tree-row { display: flex; align-items: center; height: 16px; padding-left: 33px; background: repeating-linear-gradient(90deg, #777 0 1px, transparent 1px 2px) 43px 8px / 6px 1px no-repeat; }
.tree-row > span { padding-top: 2px; }
.expander { display: grid; place-items: center; width: 9px; height: 9px; background: #e5e5e5; outline: 1px solid #929292; outline-offset: -1px; }
.folder { flex: none; margin: 0 5px 0 7px; }
.files li { display: flex; align-items: center; height: 16px; padding-left: 67px; background: repeating-linear-gradient(#777 0 1px, transparent 1px 2px) 56px 0 / 1px 100% no-repeat, repeating-linear-gradient(90deg, #777 0 1px, transparent 1px 2px) 57px 8px / 10px 1px no-repeat; }
.files button { height: 16px; margin-left: 2px; padding: 1px 2px 0 1px; line-height: 15px; }
.files .selected { background: #3596f4; color: #fff; outline: 1px dotted #7a4519; outline-offset: -1px; }
.file-pdf { font: bold 5px "Liberation Sans", sans-serif; fill: #fff; }
.splitter { display: grid; place-items: center; background: #f7f7f7; }

.scrollbar { display: flex; flex-direction: column; border: 1px solid #bdbdbd; background: #fff; }
.scrollbar .arrow { display: grid; place-items: center; height: 16px; flex: none; }
.scrollbar .arrow:first-child { border-bottom: 1px solid #ccc; }
.scrollbar .arrow:last-child { border-top: 1px solid #ccc; }
.scrollbar svg path { fill: none; stroke: #444; }
.thumb { display: flex; flex-direction: column; align-items: center; justify-content: center; gap: 1px; border: 1px solid #aaa; border-width: 1px 0; background: #dcdcdc; }
.thumb i { width: 7px; height: 2px; background: #555; }
.tree-scroll .track-before { flex: 509; }
.tree-scroll .thumb { flex: 104; }
.tree-scroll .track-after { flex: 43; }
.page-scroll .track-before { flex: 35; }
.page-scroll .thumb { flex: 35; }
.page-scroll .track-after { flex: 569; }

.document { display: flex; flex-direction: column; min-width: 0; min-height: 0; }
.doc-tabs { display: flex; height: 23px; flex: none; border-bottom: 1px solid #8d99a1; }
.doc-tab { position: relative; display: flex; align-items: center; height: 23px; }
.doc-tab > svg { position: absolute; inset: 0; }
.doc-tab > span, .doc-tab > button { position: relative; margin-top: 4px; }
.welcome { width: 71px; padding-left: 19px; }
.current { width: 150px; padding-left: 11px; gap: 2px; color: #0000d0; }
.tab-close { width: 13px; height: 13px; background: #a7a7a7; }
.tab-close svg { display: block; }
.toolbar { display: flex; align-items: center; height: 29px; flex: none; padding-left: 2px; border-bottom: 2px solid #929292; background: #f0f0f0; font: 13px/20px "Open Sans", "Noto Sans", sans-serif; }
.toolbar button { display: grid; place-items: center; flex: none; width: 24px; height: 24px; }
.separator { flex: none; width: 1px; height: 22px; margin-right: 9px; background: #aaa; }
.page-label { width: 38px; }
.find-label { width: 34px; }
.toolbar input { height: 21px; border: 1px solid #ececec; border-top-color: #999; border-left-color: #999; border-radius: 0; background: #fff; font: inherit; outline: 0; }
.page-input { width: 40px; padding: 0 3px; text-align: right; }
.page-total { width: 35px; padding-left: 4px; }
.find-input { flex: none; width: 160px; margin-right: 2px; }
.case-big { font: 14px "Liberation Sans", sans-serif; fill: #8b7df0; }
.case-small { font: bold 11px "Liberation Sans", sans-serif; fill: #d948b0; }

.viewer { display: grid; grid-template-columns: 1fr 14px; flex: 1; min-height: 0; background: #999; }
.canvas { min-width: 0; overflow: hidden; padding: 0 145px; }
.sheet { display: block; width: 100%; background: #fff; font-family: "Noto Sans", sans-serif; }
.wire { fill: none; stroke: #777; shape-rendering: crispEdges; }
.stub { fill: none; stroke: #222; shape-rendering: crispEdges; }
.part { fill: none; stroke: #777; }
.part circle { fill: #fff; stroke: #333; }
.earth { fill: none; stroke: #888; shape-rendering: crispEdges; }
.dot { fill: #222; }
.dashed { fill: none; stroke: #777; stroke-dasharray: 3 2; shape-rendering: crispEdges; }
.thin-box { fill: none; stroke: #555; shape-rendering: crispEdges; }
.bold-box { fill: none; stroke: #111; shape-rendering: crispEdges; }
.heavy { stroke-width: 2; }
.rule { fill: none; stroke: #333; shape-rendering: crispEdges; }
.diagonal { stroke: #222; }
.small { fill: #333; }
.faint { fill: #777; font-family: "Liberation Sans Narrow", "Noto Sans", sans-serif; }
.wide { font-family: "DejaVu Sans", sans-serif; }
.notes { font-family: "Liberation Sans", sans-serif; }
.serif { font-family: "Liberation Serif", serif; fill: #555; }
.block { font-family: "DejaVu Sans Condensed", "DejaVu Sans", sans-serif; }
.strong { font-family: "Noto Sans", sans-serif; font-weight: 600; }

.status { display: flex; align-items: flex-end; justify-content: space-between; height: 20px; flex: none; padding-right: 2px; background: #45678a; line-height: 14px; }
.status span:last-child { color: #fff; }
</style>
